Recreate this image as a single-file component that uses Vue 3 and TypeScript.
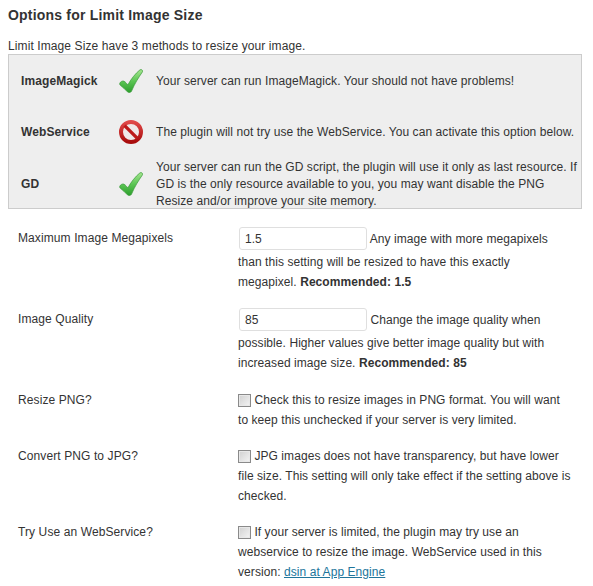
<script setup lang="ts">
interface Method { name: string; ok: boolean; lines: string[] }
const methods: Method[] = [
  { name: 'ImageMagick', ok: true, lines: ['Your server can run ImageMagick. Your should not have problems!'] },
  { name: 'WebService', ok: false, lines: ['The plugin will not try use the WebService. You can activate this option below.'] },
  { name: 'GD', ok: true, lines: ['Your server can run the GD script, the plugin will use it only as last resource. If', 'GD is the only resource available to you, you may want disable the PNG', 'Resize and/or improve your site memory.'] },
]
</script>

<template>
  <div class="page">
    <h3 class="title">Options for Limit Image Size</h3>
    <p class="intro">Limit Image Size have 3 methods to resize your image.</p>
    <div class="box">
      <div v-for="m in methods" :key="m.name" class="method">
        <strong class="mname">{{ m.name }}</strong>
        <svg v-if="m.ok" class="icon" viewBox="0 0 24 24" aria-hidden="true">
          <defs>
            <linearGradient :id="'g' + m.name" x1="0" y1="0" x2="0" y2="1">
              <stop offset="0" stop-color="#a4e58e" />
              <stop offset="0.5" stop-color="#5cc655" />
              <stop offset="1" stop-color="#2c9e2c" />
            </linearGradient>
          </defs>
          <path d="M0.8 14.2 C1.6 12.4 3.6 11.6 5 12.2 C6.4 12.9 7.8 14.6 8.8 16 C12 10 16.5 4.4 21 0.8 C22.6 0.1 24 1.2 23.5 2.8 C19.5 8.5 15.5 15 12.6 22 C12 23.6 9.6 24 8.4 22.8 C6.2 20.4 3.6 18 1.3 16.2 C0.7 15.7 0.5 14.8 0.8 14.2 Z" :fill="'url(#g' + m.name + ')'" stroke="#3a9a3a" stroke-width="0.7" />
        </svg>
        <svg v-else class="icon" viewBox="0 0 24 24" aria-hidden="true">
          <defs>
            <linearGradient id="stopG" x1="0" y1="0" x2="0" y2="1">
              <stop offset="0" stop-color="#e04848" />
              <stop offset="1" stop-color="#a80c0c" />
            </linearGradient>
          </defs>
          <circle cx="12" cy="12" r="10" fill="#f0e8e8" stroke="url(#stopG)" stroke-width="4" />
          <path d="M5.6 5.6 L18.4 18.4" stroke="#bd1a1a" stroke-width="3.4" />
        </svg>
        <span class="mtext">
          <span v-for="l in m.lines" :key="l" class="mline">{{ l }}</span>
        </span>
      </div>
    </div>

    <div class="form">
      <div class="row">
        <label class="label">Maximum Image Megapixels</label>
        <div class="field"><input class="num" type="text" value="1.5" /> Any image with more megapixels<br />than this setting will be resized to have this exactly<br />megapixel. <strong>Recommended: 1.5</strong></div>
      </div>
      <div class="row">
        <label class="label">Image Quality</label>
        <div class="field"><input class="num" type="text" value="85" /> Change the image quality when<br />possible. Higher values give better image quality but with<br />increased image size. <strong>Recommended: 85</strong></div>
      </div>
      <div class="row row-check">
        <label class="label">Resize PNG?</label>
        <div class="field"><span class="check"></span> Check this to resize images in PNG format. You will want<br />to keep this unchecked if your server is very limited.</div>
      </div>
      <div class="row row-check">
        <label class="label">Convert PNG to JPG?</label>
        <div class="field"><span class="check"></span> JPG images does not have transparency, but have lower<br />file size. This setting will only take effect if the setting above is<br />checked.</div>
      </div>
      <div class="row row-check">
        <label class="label">Try Use an WebService?</label>
        <div class="field"><span class="check"></span> If your server is limited, the plugin may try use an<br />webservice to resize the image. WebService used in this<br />version: <a class="link" href="#">dsin at App Engine</a></div>
      </div>
    </div>
  </div>
</template>

<style scoped>
.page {
  width: 593px;
  height: 586px;
  overflow: hidden;
  box-sizing: border-box;
  padding: 7px 8px 0;
  font-family: "Liberation Sans", Arial, sans-serif;
  font-size: 12px;
  letter-spacing: 0.1px;
  color: #333;
  background: #fff;
}
.title {
  margin: 0;
  font-size: 14px;
  letter-spacing: 0.2px;
  line-height: 17px;
  font-weight: bold;
  color: #333;
}
.intro {
  margin: 14px 0 0;
  line-height: 16px;
}
.box {
  width: 574px;
  box-sizing: border-box;
  background: #eee;
  border: 1px solid #ccc;
}
.method {
  display: grid;
  grid-template-columns: 98px 24px 1fr;
  align-items: center;
  height: 51px;
  padding-left: 12px;
}
.mname { padding-top: 1px; }
.icon { width: 24px; height: 24px; display: block; }
.mtext {
  padding: 2px 0 0 13px;
  line-height: 17px;
  letter-spacing: 0.07px;
}
.mline { display: block; white-space: nowrap; }
.form { padding-left: 10px; margin-top: 10px; }
.row {
  display: grid;
  grid-template-columns: 220px 345px;
  padding: 8px 0;
}
.row-check { padding: 9px 0 7px; }
.label { line-height: 20px; padding-top: 1px; }
.row-check .label { padding-top: 0; }
.field { line-height: 20px; white-space: nowrap; letter-spacing: 0.07px; }
.num {
  width: 128px;
  height: 23px;
  box-sizing: border-box;
  margin: 0 0 2px 1px;
  padding: 0 5px;
  border: 1px solid #dfdfdf;
  border-radius: 3px;
  background: #fff;
  font: 12px "Liberation Sans", Arial, sans-serif;
  color: #333;
  vertical-align: middle;
}
.check {
  display: inline-block;
  width: 13px;
  height: 13px;
  box-sizing: border-box;
  border: 1px solid #8a8a8a;
  background: linear-gradient(135deg, #d0d0d0, #f4f4f4);
  box-shadow: inset 0 0 0 1px #e8e8e8;
  vertical-align: -3px;
}
.link { color: #21759b; text-decoration: underline; }
</style>
